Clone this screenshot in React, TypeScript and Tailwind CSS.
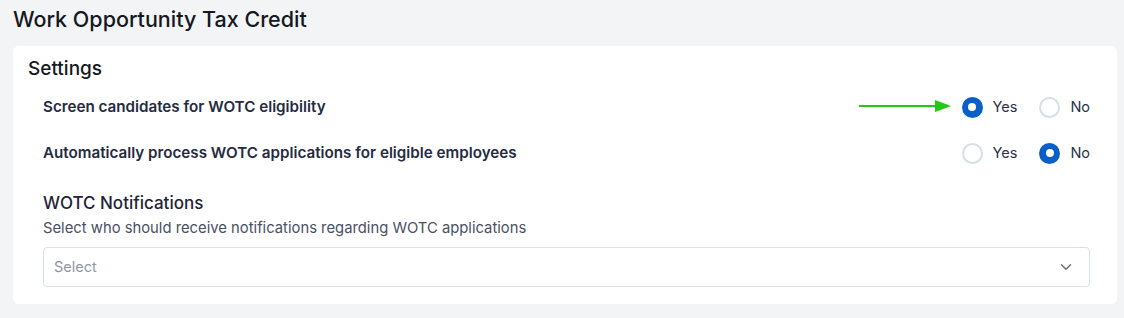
import { ChevronDown } from 'lucide-react';

interface Setting {
  label: string;
  value: 'yes' | 'no';
  arrow?: boolean;
}

const settings: Setting[] = [
  { label: 'Screen candidates for WOTC eligibility', value: 'yes', arrow: true },
  { label: 'Automatically process WOTC applications for eligible employees', value: 'no' },
];

function Radio({ checked, label }: { checked: boolean; label: string }) {
  return (
    <label className="flex items-center gap-[10px]">
      {checked ? (
        <span className="w-[21px] h-[21px] rounded-full bg-[#0a5fc9] flex items-center justify-center">
          <span className="w-[8px] h-[8px] rounded-full bg-white" />
        </span>
      ) : (
        <span className="w-[21px] h-[21px] rounded-full border-2 border-[#d4e0e8] bg-white" />
      )}
      <span className="text-[14.5px] text-[#2a3147]">{label}</span>
    </label>
  );
}

export default function App() {
  return (
    <div
      className="w-[1124px] h-[318px] bg-[#f3f4f6] pl-[13px] pr-[7px] pt-[5px]"
      style={{ fontFamily: 'Inter, "Noto Sans", sans-serif' }}
    >
      <h1 className="text-[21.5px] font-medium text-[#141821] leading-[28px]">Work Opportunity Tax Credit</h1>
      <div className="mt-[13px] bg-white rounded-[6px] pl-[15px] pr-[27px] pt-[10px] pb-[17px]">
        <h2 className="text-[19px] font-medium text-[#141821] leading-[26px]">Settings</h2>
        <div className="pl-[15px]">
          {settings.map((s) => (
            <div key={s.label} className="flex items-center justify-between h-[46px] pt-[4px]">
              <div className="text-[15.2px] font-semibold text-[#252b42]">{s.label}</div>
              <div className="flex items-center">
                {s.arrow && (
                  <svg width="92" height="12" viewBox="0 0 92 12" className="mr-[11px] -mt-[3px]">
                    <line x1="0" y1="6" x2="78" y2="6" stroke="#22c814" strokeWidth="2" />
                    <polygon points="76,0 92,6 76,12" fill="#22c814" />
                  </svg>
                )}
                <div className="flex items-center gap-[22px]">
                  <Radio checked={s.value === 'yes'} label="Yes" />
                  <Radio checked={s.value === 'no'} label="No" />
                </div>
              </div>
            </div>
          ))}
          <div className="mt-[18px]">
            <h3 className="text-[17px] font-medium text-[#1f2436] leading-[22px]">WOTC Notifications</h3>
            <p className="mt-[4px] text-[14.8px] text-[#4a5064] leading-[20px]">
              Select who should receive notifications regarding WOTC applications
            </p>
            <div className="mt-[9px] h-[40px] border border-[#d5e2e8] rounded-[4px] flex items-center justify-between pl-[10px] pr-[14px]">
              <span className="text-[14.5px] text-[#9096a3]">Select</span>
              <ChevronDown size={18} strokeWidth={2} className="text-[#6b7080]" />
            </div>
          </div>
        </div>
      </div>
    </div>
  );
}
